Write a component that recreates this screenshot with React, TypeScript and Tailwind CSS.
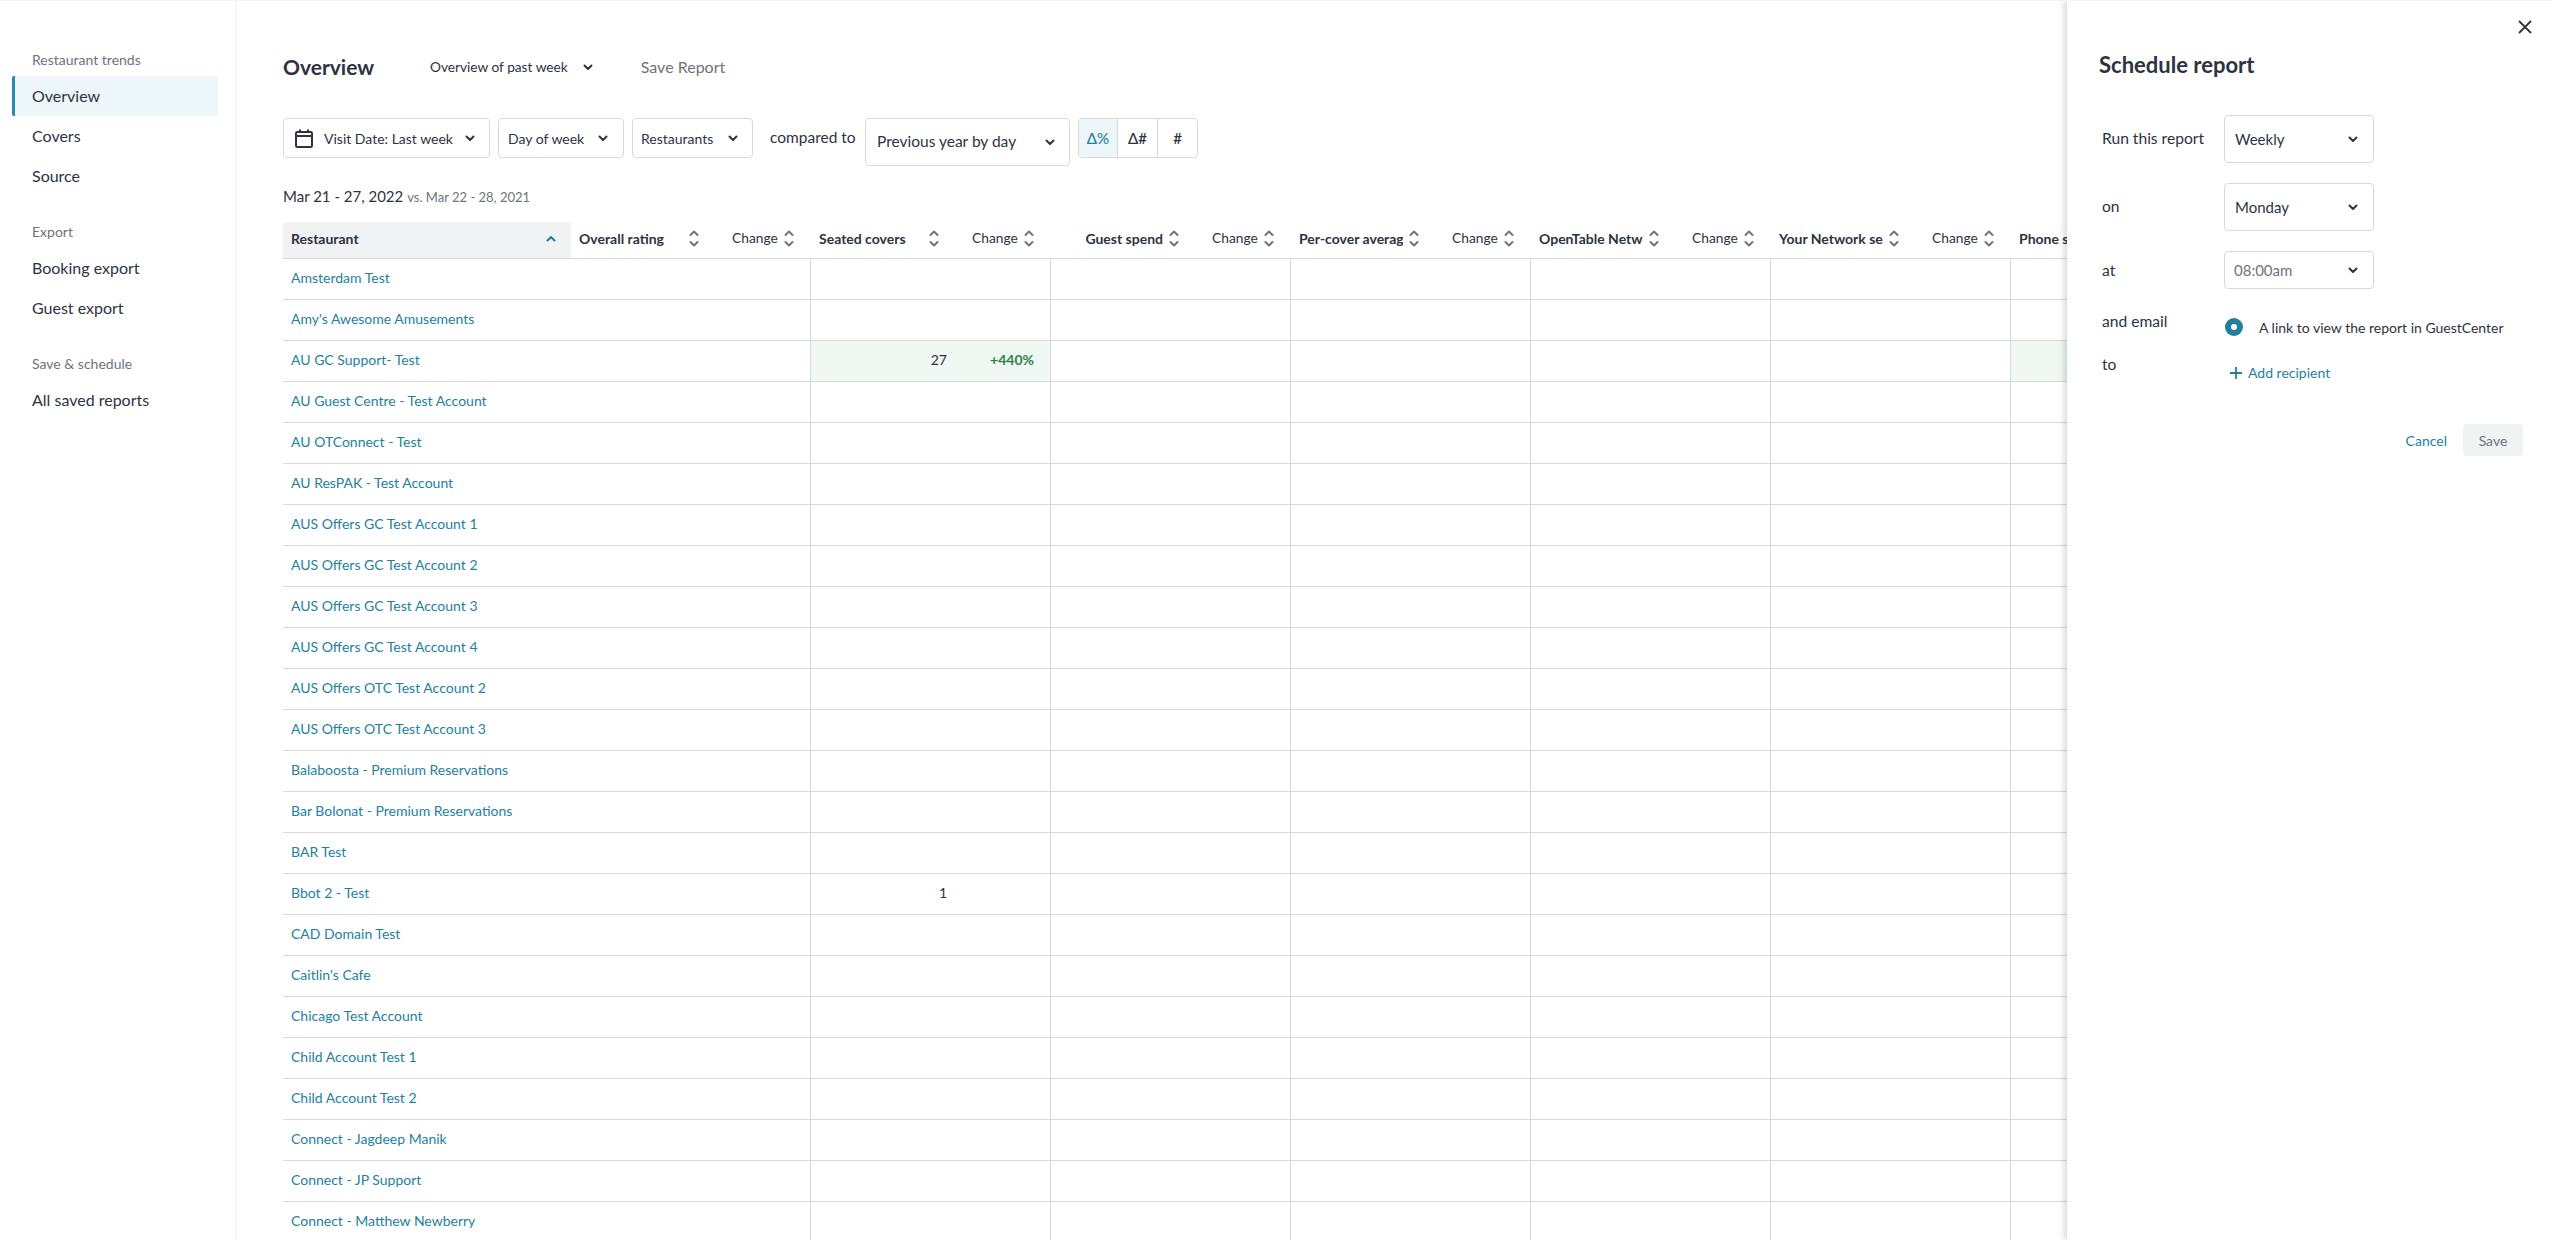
import React from "react";

const names = [
  "Amsterdam Test", "Amy's Awesome Amusements", "AU GC Support- Test", "AU Guest Centre - Test Account",
  "AU OTConnect - Test", "AU ResPAK - Test Account", "AUS Offers GC Test Account 1", "AUS Offers GC Test Account 2",
  "AUS Offers GC Test Account 3", "AUS Offers GC Test Account 4", "AUS Offers OTC Test Account 2", "AUS Offers OTC Test Account 3",
  "Balaboosta - Premium Reservations", "Bar Bolonat - Premium Reservations", "BAR Test", "Bbot 2 - Test",
  "CAD Domain Test", "Caitlin's Cafe", "Chicago Test Account", "Child Account Test 1", "Child Account Test 2",
  "Connect - Jagdeep Manik", "Connect - JP Support", "Connect - Matthew Newberry",
];

const metrics: { label: string; end?: boolean }[] = [
  { label: "Overall rating" }, { label: "Seated covers" }, { label: "Guest spend", end: true },
  { label: "Per-cover average" }, { label: "OpenTable Network seated" }, { label: "Your Network seated" }, { label: "Phone seated" },
];

function Chev({ className = "" }: { className?: string }) {
  return (
    <svg width="10" height="7" viewBox="0 0 10 7" className={className} fill="none">
      <path d="M1.5 1.5 5 5l3.5-3.5" stroke="#2d333f" strokeWidth="2" strokeLinecap="round" strokeLinejoin="round" />
    </svg>
  );
}

function Sort() {
  return (
    <svg width="10" height="17" viewBox="0 0 10 17" fill="none" className="shrink-0">
      <path d="M1.5 5 5 1.5 8.5 5M1.5 12 5 15.5 8.5 12" stroke="#6f737b" strokeWidth="2" strokeLinecap="round" strokeLinejoin="round" />
    </svg>
  );
}

function NavItem({ children, active }: { children: React.ReactNode; active?: boolean }) {
  return (
    <div className={`h-10 flex items-center text-[16px] text-[#2d333f] ${active ? "w-[206px] ml-3 pl-[17px] border-l-[3px] border-[#2a8bb0] bg-[#edf6f9] rounded-[2px]" : "pl-8"}`}>
      {children}
    </div>
  );
}

function Box({ className = "", children }: { className?: string; children: React.ReactNode }) {
  return (
    <div className={`flex items-center justify-between border border-[#d8d9db] rounded-[4px] bg-white ${className}`}>
      {children}
    </div>
  );
}

function HeadCell({ label, end }: { label: string; end?: boolean }) {
  return (
    <div className="w-[240px] shrink-0 flex items-center pb-[3px]">
      <div className={`w-[104px] ml-2 overflow-hidden whitespace-nowrap font-bold text-[#2d333f] flex ${end ? "justify-end" : ""}`}>{label}</div>
      <div className="ml-[6px]"><Sort /></div>
      <div className="ml-[33px] w-[46px] text-[13.8px] text-[#2d333f]">Change</div>
      <div className="ml-[6px]"><Sort /></div>
    </div>
  );
}

function Row({ name, index }: { name: string; index: number }) {
  return (
    <div className="flex h-[41px] border-b border-[#d8d9db]">
      <div className="w-[288px] shrink-0 pl-2 pb-[4px] flex items-center text-[#247f9e]">{name}</div>
      {metrics.map((m, i) => {
        const green = index === 2 && (i === 1 || i === 6);
        const showData = i === 1 && (index === 2 || index === 15);
        return (
          <div key={m.label} className={`w-[240px] shrink-0 flex items-center pb-[4px] border-r border-[#d8d9db] ${green ? "bg-[#eff8f2]" : ""}`}>
            {showData && (
              <>
                <div className="w-[136px] text-right text-[#2d333f]">{index === 2 ? "27" : "1"}</div>
                {index === 2 && <div className="w-[87px] text-right font-bold text-[#2f8049]">+440%</div>}
              </>
            )}
          </div>
        );
      })}
    </div>
  );
}

export default function App() {
  return (
    <div className="relative flex h-[1240px] w-full overflow-hidden border-t border-[#f4f5f6] bg-white text-[14px] text-[#2d333f] font-['Lato','Liberation_Sans',sans-serif]">
      <aside className="w-[236px] shrink-0 border-r border-[#f1f2f4] pt-[45px]">
        <div className="pl-8 h-[26px] flex items-center text-[14px] text-[#6f737b]">Restaurant trends</div>
        <div className="mt-[4px]">
          <NavItem active>Overview</NavItem>
          <NavItem>Covers</NavItem>
          <NavItem>Source</NavItem>
        </div>
        <div className="pl-8 mt-[22px] h-[26px] flex items-center text-[14px] text-[#6f737b]">Export</div>
        <div className="mt-[4px]">
          <NavItem>Booking export</NavItem>
          <NavItem>Guest export</NavItem>
        </div>
        <div className="pl-8 mt-[22px] h-[26px] flex items-center text-[14px] text-[#6f737b]">Save &amp; schedule</div>
        <div className="mt-[4px]">
          <NavItem>All saved reports</NavItem>
        </div>
      </aside>

      <main className="flex-1 min-w-0 pl-[47px] overflow-hidden">
        <div className="flex items-center h-[30px] mt-[51px]">
          <h1 className="text-[21px] font-bold w-[147px]">Overview</h1>
          <span className="text-[13.7px]">Overview of past week</span>
          <Chev className="ml-[15px]" />
          <span className="ml-[48px] text-[16px] text-[#6f737b]">Save Report</span>
        </div>

        <div className="flex items-start gap-[8px] mt-[36px] text-[14px]">
          <Box className="w-[207px] h-10 pl-[11px] pr-[14px]">
            <svg width="18" height="19" viewBox="0 0 18 19" fill="none" className="shrink-0">
              <rect x="1" y="3" width="16" height="15" rx="1.5" stroke="#2d333f" strokeWidth="2" />
              <path d="M1 7h16" stroke="#2d333f" strokeWidth="2" />
              <path d="M5 0.5v3M13 0.5v3" stroke="#2d333f" strokeWidth="2" />
            </svg>
            <span className="ml-[11px] mr-auto whitespace-nowrap">Visit Date: Last week</span>
            <Chev />
          </Box>
          <Box className="w-[126px] h-10 pl-[9px] pr-[15px]"><span>Day of week</span><Chev /></Box>
          <Box className="w-[121px] h-10 pl-[8px] pr-[14px]"><span>Restaurants</span><Chev /></Box>
          <span className="ml-[9px] h-10 flex items-center w-[87px] whitespace-nowrap text-[15.5px]">compared to</span>
          <Box className="w-[205px] h-[48px] pl-[11px] pr-[14px] text-[15.5px] text-[#2d333f]"><span>Previous year by day</span><Chev /></Box>
          <div className="flex h-10 border border-[#d8d9db] rounded-[4px] overflow-hidden text-[15px] font-medium">
            <div className="w-[39px] flex items-center justify-center bg-[#edf6f9] text-[#247f9e] border-r border-[#d8d9db]">Δ%</div>
            <div className="w-[40px] flex items-center justify-center border-r border-[#d8d9db]">Δ#</div>
            <div className="w-[39px] flex items-center justify-center">#</div>
          </div>
        </div>

        <div className="mt-[16px] h-[38px] pt-[3px] flex items-baseline relative w-fit">
          <span className="text-[15px]">Mar 21 - 27, 2022</span>
          <span className="ml-1 text-[13px] text-[#6f737b]">vs. Mar 22 - 28, 2021</span>
        </div>

        <div className="w-[2000px] text-[14px] mt-[2px]">
          <div className="flex h-[37px] border-b border-[#d8d9db]">
            <div className="w-[288px] shrink-0 bg-[#f1f2f4] rounded-t-[4px] pl-2 pr-[15px] pb-[3px] flex items-center justify-between font-bold">
              <span>Restaurant</span>
              <svg width="10" height="7" viewBox="0 0 10 7" fill="none"><path d="M1.5 5.5 5 2l3.5 3.5" stroke="#247f9e" strokeWidth="2" strokeLinecap="round" strokeLinejoin="round" /></svg>
            </div>
            {metrics.map((m) => <HeadCell key={m.label} label={m.label} end={m.end} />)}
          </div>
          {names.map((n, i) => <Row key={n} name={n} index={i} />)}
        </div>
      </main>

      <aside className="absolute right-0 -top-px bottom-0 w-[485px] bg-white shadow-[-3px_0_6px_rgba(45,51,63,0.18)] pl-[32px] pr-[30px]">
        <button className="absolute right-[20px] top-[20px]" aria-label="Close">
          <svg width="14" height="14" viewBox="0 0 14 14" fill="none"><path d="M1 1l12 12M13 1 1 13" stroke="#2d333f" strokeWidth="1.8" /></svg>
        </button>
        <h2 className="mt-[50px] text-[22px] leading-[30px] font-bold">Schedule report</h2>
        <div className="mt-[35px] flex items-center h-[48px]">
          <span className="w-[125px] pl-[3px] text-[15.6px]">Run this report</span>
          <Box className="w-[150px] h-[48px] pl-[10px] pr-[15px] text-[15px]"><span>Weekly</span><Chev /></Box>
        </div>
        <div className="mt-[20px] flex items-center h-[48px]">
          <span className="w-[125px] pl-[3px] text-[15.6px]">on</span>
          <Box className="w-[150px] h-[48px] pl-[10px] pr-[15px] text-[15px]"><span>Monday</span><Chev /></Box>
        </div>
        <div className="mt-[20px] flex items-center h-[38px]">
          <span className="w-[125px] pl-[3px] pt-[2px] text-[15.6px]">at</span>
          <Box className="w-[150px] h-[38px] pl-[9px] pr-[15px] text-[15px] text-[#6f737b]"><span>08:00am</span><Chev /></Box>
        </div>
        <div className="mt-[20px] flex">
          <div className="w-[125px] pl-[3px] pt-[2px] text-[15.6px]">
            <div className="h-[22px] flex items-center">and email</div>
            <div className="h-[22px] mt-[21px] flex items-center">to</div>
          </div>
          <div>
            <div className="flex items-center mt-[9px] h-[18px] pl-[1px] text-[14px]">
              <span className="w-[18px] h-[18px] rounded-full bg-[#247f9e] flex items-center justify-center"><span className="w-[6px] h-[6px] rounded-full bg-white" /></span>
              <span className="ml-[16px]">A link to view the report in GuestCenter</span>
            </div>
            <div className="flex items-center mt-[26px] text-[14px] text-[#247f9e] pl-[6px]">
              <svg width="12" height="12" viewBox="0 0 12 12" fill="none" className="mr-[6px]"><path d="M6 0v12M0 6h12" stroke="#247f9e" strokeWidth="1.8" /></svg>
              Add recipient
            </div>
          </div>
        </div>
        <div className="mt-[41px] flex justify-end items-center mr-[-1px] text-[14px]">
          <span className="text-[#247f9e]">Cancel</span>
          <span className="ml-4 w-[60px] h-8 rounded-[4px] bg-[#f1f2f4] flex items-center justify-center text-[#6f737b]">Save</span>
        </div>
      </aside>
    </div>
  );
}
